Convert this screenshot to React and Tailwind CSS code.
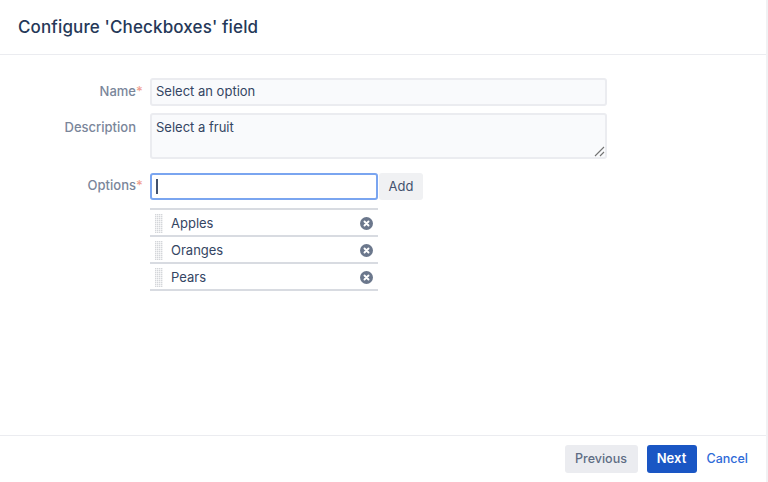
import React from "react";

function Grip() {
  return (
    <svg width="8" height="19" viewBox="0 0 8 19" className="shrink-0">
      <defs>
        <pattern id="gripdots" width="2" height="2" patternUnits="userSpaceOnUse">
          <rect width="1.4" height="1.4" fill="#d4d6da" />
        </pattern>
      </defs>
      <rect width="8" height="19" fill="url(#gripdots)" />
    </svg>
  );
}

function Remove() {
  return (
    <svg width="13" height="13" viewBox="0 0 13 13" className="shrink-0">
      <circle cx="6.5" cy="6.5" r="6.5" fill="#6b778c" />
      <path d="M4.5 4.5l4 4M8.5 4.5l-4 4" stroke="#fff" strokeWidth="1.9" strokeLinecap="round" />
    </svg>
  );
}

function Row({ label, children, required, className = "", labelClass = "pt-[5px]" }) {
  return (
    <div className={`flex items-start ${className}`}>
      <div className={`w-[136px] shrink-0 text-right text-[13px] leading-[18px] font-medium text-[#7a869a] ${labelClass}`}>
        <span className="relative">
          {label}
          {required && <span className="absolute top-[-1px] left-full text-[#f0a090]">*</span>}
        </span>
      </div>
      <div className="ml-[14px] flex-1">{children}</div>
    </div>
  );
}

export default function App() {
  const options = ["Apples", "Oranges", "Pears"];
  return (
    <div className="flex h-[482px] w-[768px] flex-col overflow-hidden border-r-2 border-[#f1f1f3] bg-white font-['Inter',sans-serif] text-[13px] text-[#344563]">
      <header className="flex h-[55px] shrink-0 items-center border-b border-[#ebecf0] pt-px pl-[18px]">
        <h1 className="text-[17px] font-medium tracking-[0.0075em] text-[#253858]">Configure 'Checkboxes' field</h1>
      </header>

      <main className="flex-1 pt-[23px]">
        <Row label="Name" required labelClass="pt-[4px]">
          <div className="flex h-[28px] w-[457px] items-center rounded-[3px] border-2 border-[#ebecf0] bg-[#f9fafc] pb-px pl-[4px] leading-none">
            Select an option
          </div>
        </Row>
        <Row label="Description" className="mt-[7px]">
          <div className="relative h-[46px] w-[457px] rounded-[3px] border-2 border-[#ebecf0] bg-[#f9fafc] pt-[4px] pl-[4px] leading-[16px]">
            Select a fruit
            <svg width="11" height="11" viewBox="0 0 11 11" className="absolute right-0 bottom-0">
              <path d="M1 10L10 1M6 10L10 6" stroke="#737373" strokeWidth="1.1" fill="none" />
            </svg>
          </div>
        </Row>
        <Row label="Options" required className="mt-[14px]" labelClass="pt-[3px]">
          <div className="flex">
            <div className="flex h-[27px] w-[228px] items-center rounded-[3px] border-2 border-[#7aa5f0] bg-white pl-[4px]">
              <span className="h-[15px] w-[2px] bg-[#42526e]" />
            </div>
            <button className="ml-[1px] h-[27px] w-[44px] rounded-[3px] bg-[#f0f1f3] text-[13px] text-[#42526e]">Add</button>
          </div>
          <ul className="mt-[8px] w-[228px] border-t-2 border-[#d8dbe1]">
            {options.map((o) => (
              <li key={o} className="flex h-[27px] items-center border-b-2 border-[#d8dbe1] px-[5px] pt-[2px]">
                <Grip />
                <span className="ml-[8px] flex-1 leading-none">{o}</span>
                <Remove />
              </li>
            ))}
          </ul>
        </Row>
      </main>

      <footer className="flex h-[47px] shrink-0 items-start border-t border-[#ebecf0] pt-[9px] pr-[18px]">
        <div className="ml-auto flex items-center">
          <button className="h-[28px] w-[73px] rounded-[3px] bg-[#ebecf0] text-[12.5px] font-medium text-[#5e6c84]">Previous</button>
          <button className="ml-[9px] h-[28px] w-[50px] rounded-[3px] bg-[#1a56c4] text-[13px] font-semibold text-white">Next</button>
          <a className="ml-[10px] text-[12.5px] font-medium text-[#2f6bd8]">Cancel</a>
        </div>
      </footer>
    </div>
  );
}
